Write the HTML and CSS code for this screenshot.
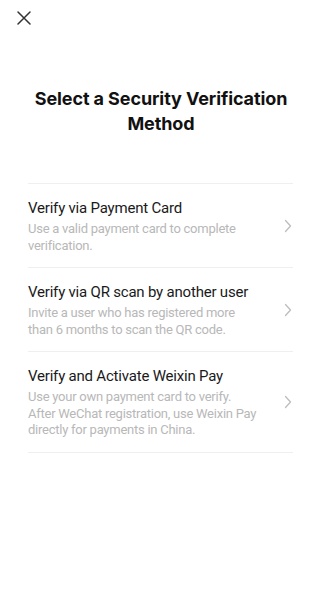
FILE: index.html
```html
<!DOCTYPE html>
<html>
<head>
<meta charset="utf-8">
<link rel="stylesheet" href="styles.css">
</head>
<body>
<div class="page">
  <div class="topbar">
    <svg class="close" width="16" height="16" viewBox="0 0 16 16"><path d="M2 2L14 14M14 2L2 14" stroke="#333" stroke-width="1.5" fill="none" stroke-linecap="round"/></svg>
  </div>
  <h1 class="title">Select a Security Verification Method</h1>
  <div class="list">
    <div class="item">
      <div class="text">
        <div class="item-title">Verify via Payment Card</div>
        <div class="item-desc">Use a valid payment card to complete verification.</div>
      </div>
      <svg class="chev" width="8" height="14" viewBox="0 0 8 14"><path d="M1.5 1.5L6.5 7L1.5 12.5" stroke="#bdbdbd" stroke-width="1.3" fill="none" stroke-linecap="round" stroke-linejoin="round"/></svg>
    </div>
    <div class="item">
      <div class="text">
        <div class="item-title">Verify via QR scan by another user</div>
        <div class="item-desc">Invite a user who has registered more than 6 months to scan the QR code.</div>
      </div>
      <svg class="chev" width="8" height="14" viewBox="0 0 8 14"><path d="M1.5 1.5L6.5 7L1.5 12.5" stroke="#bdbdbd" stroke-width="1.3" fill="none" stroke-linecap="round" stroke-linejoin="round"/></svg>
    </div>
    <div class="item">
      <div class="text">
        <div class="item-title">Verify and Activate Weixin Pay</div>
        <div class="item-desc">Use your own payment card to verify. After WeChat registration, use Weixin Pay directly for payments in China.</div>
      </div>
      <svg class="chev" width="8" height="14" viewBox="0 0 8 14"><path d="M1.5 1.5L6.5 7L1.5 12.5" stroke="#bdbdbd" stroke-width="1.3" fill="none" stroke-linecap="round" stroke-linejoin="round"/></svg>
    </div>
  </div>
</div>
</body>
</html>
```

FILE: styles.css
```css
html, body {
  margin: 0;
  padding: 0;
  background: #fff;
}
body {
  font-family: Inter, "Liberation Sans", sans-serif;
  color: #1a1a1a;
}
.page {
  width: 322px;
  height: 600px;
  box-sizing: border-box;
}
.topbar {
  height: 36px;
  padding: 10px 0 0 16px;
  box-sizing: border-box;
}
.close {
  display: block;
}
.title {
  margin: 50px 30px 0;
  font-size: 18px;
  line-height: 25px;
  font-weight: 700;
  text-align: center;
  color: #111;
  letter-spacing: -0.1px;
}
.list {
  margin: 47px 29px 0 28px;
  border-top: 1px solid #efefef;
}
.item {
  display: flex;
  align-items: center;
  padding: 14px 0 13px;
  border-bottom: 1px solid #efefef;
}
.text {
  flex: 1;
  min-width: 0;
}
.item-title {
  font-family: Roboto, "Liberation Sans", sans-serif;
  font-size: 15px;
  line-height: 20px;
  color: #1a1a1a;
  letter-spacing: -0.2px;
  white-space: nowrap;
}
.item-desc {
  font-family: Roboto, "Liberation Sans", sans-serif;
  margin-top: 3px;
  font-size: 13px;
  line-height: 16.5px;
  color: #b8b8b8;
  letter-spacing: -0.25px;
  padding-right: 24px;
}
.chev {
  flex: none;
  margin-right: 1px;
}
```
